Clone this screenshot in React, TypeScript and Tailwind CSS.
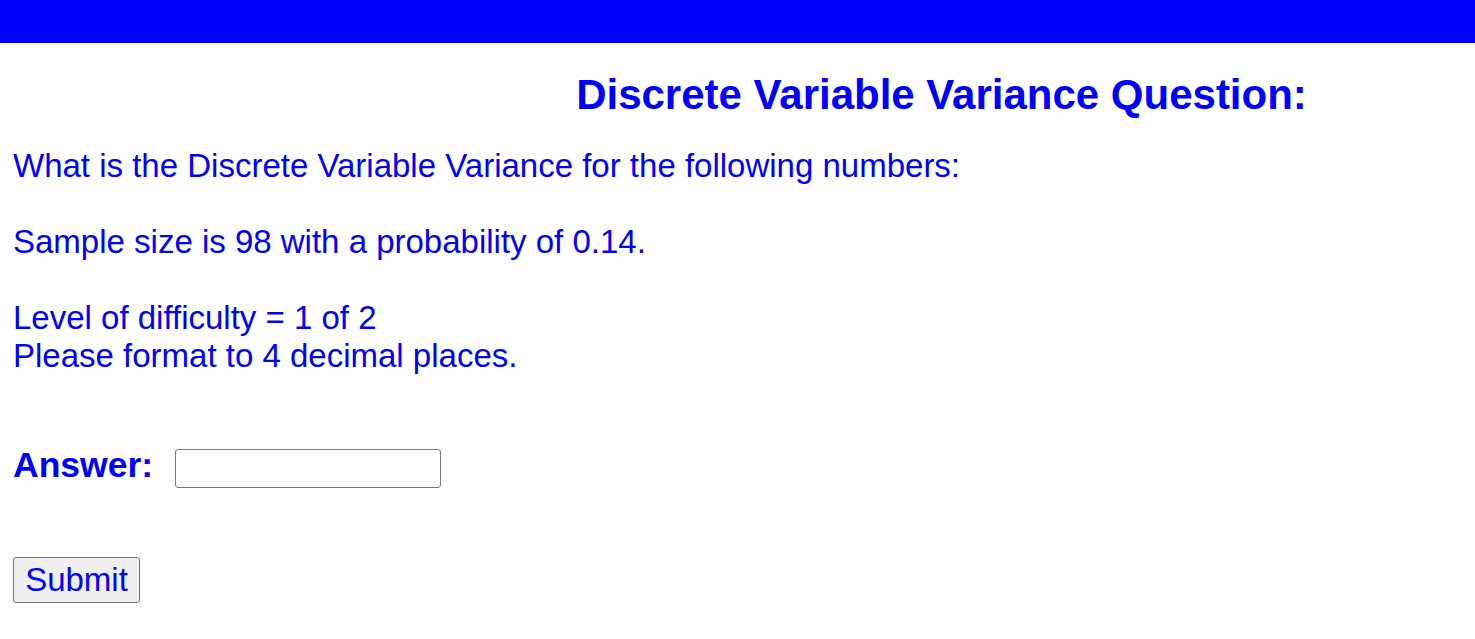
import { useState } from "react";

export default function App() {
  const [answer, setAnswer] = useState("");

  return (
    <div className="min-h-screen bg-white text-[#0000ff] font-['Liberation_Sans',Arial,sans-serif]">
      <div className="h-[43px] bg-[#0000ff]" />

      <h1 className="mt-[27.5px] pl-[408px] text-center text-[42px] font-bold leading-[48px]">
        Discrete Variable Variance Question:
      </h1>

      <div className="mt-[28px] px-[13px] text-[33px] leading-[38px]">
        <p>What is the Discrete Variable Variance for the following numbers:</p>
        <br />
        <p>Sample size is 98 with a probability of 0.14.</p>
        <br />
        <p>Level of difficulty = 1 of 2</p>
        <p>Please format to 4 decimal places.</p>

        <div className="mt-[70px] flex items-start gap-[22px]">
          <span className="mt-[1px] text-[35.5px] font-bold leading-[39px]">Answer:</span>
          <input
            value={answer}
            onChange={e => setAnswer(e.target.value)}
            className="mt-[4px] h-[39px] w-[266px] rounded-[3px] border border-[#767676] bg-white px-1 text-[20px] text-black outline-none"
          />
        </div>

        <button className="mt-[69px] h-[46px] w-[127px] rounded-[3px] border border-[#767676] bg-[#efefef] text-[33px] leading-[38px] text-[#0000ff]">
          Submit
        </button>
      </div>
    </div>
  );
}
